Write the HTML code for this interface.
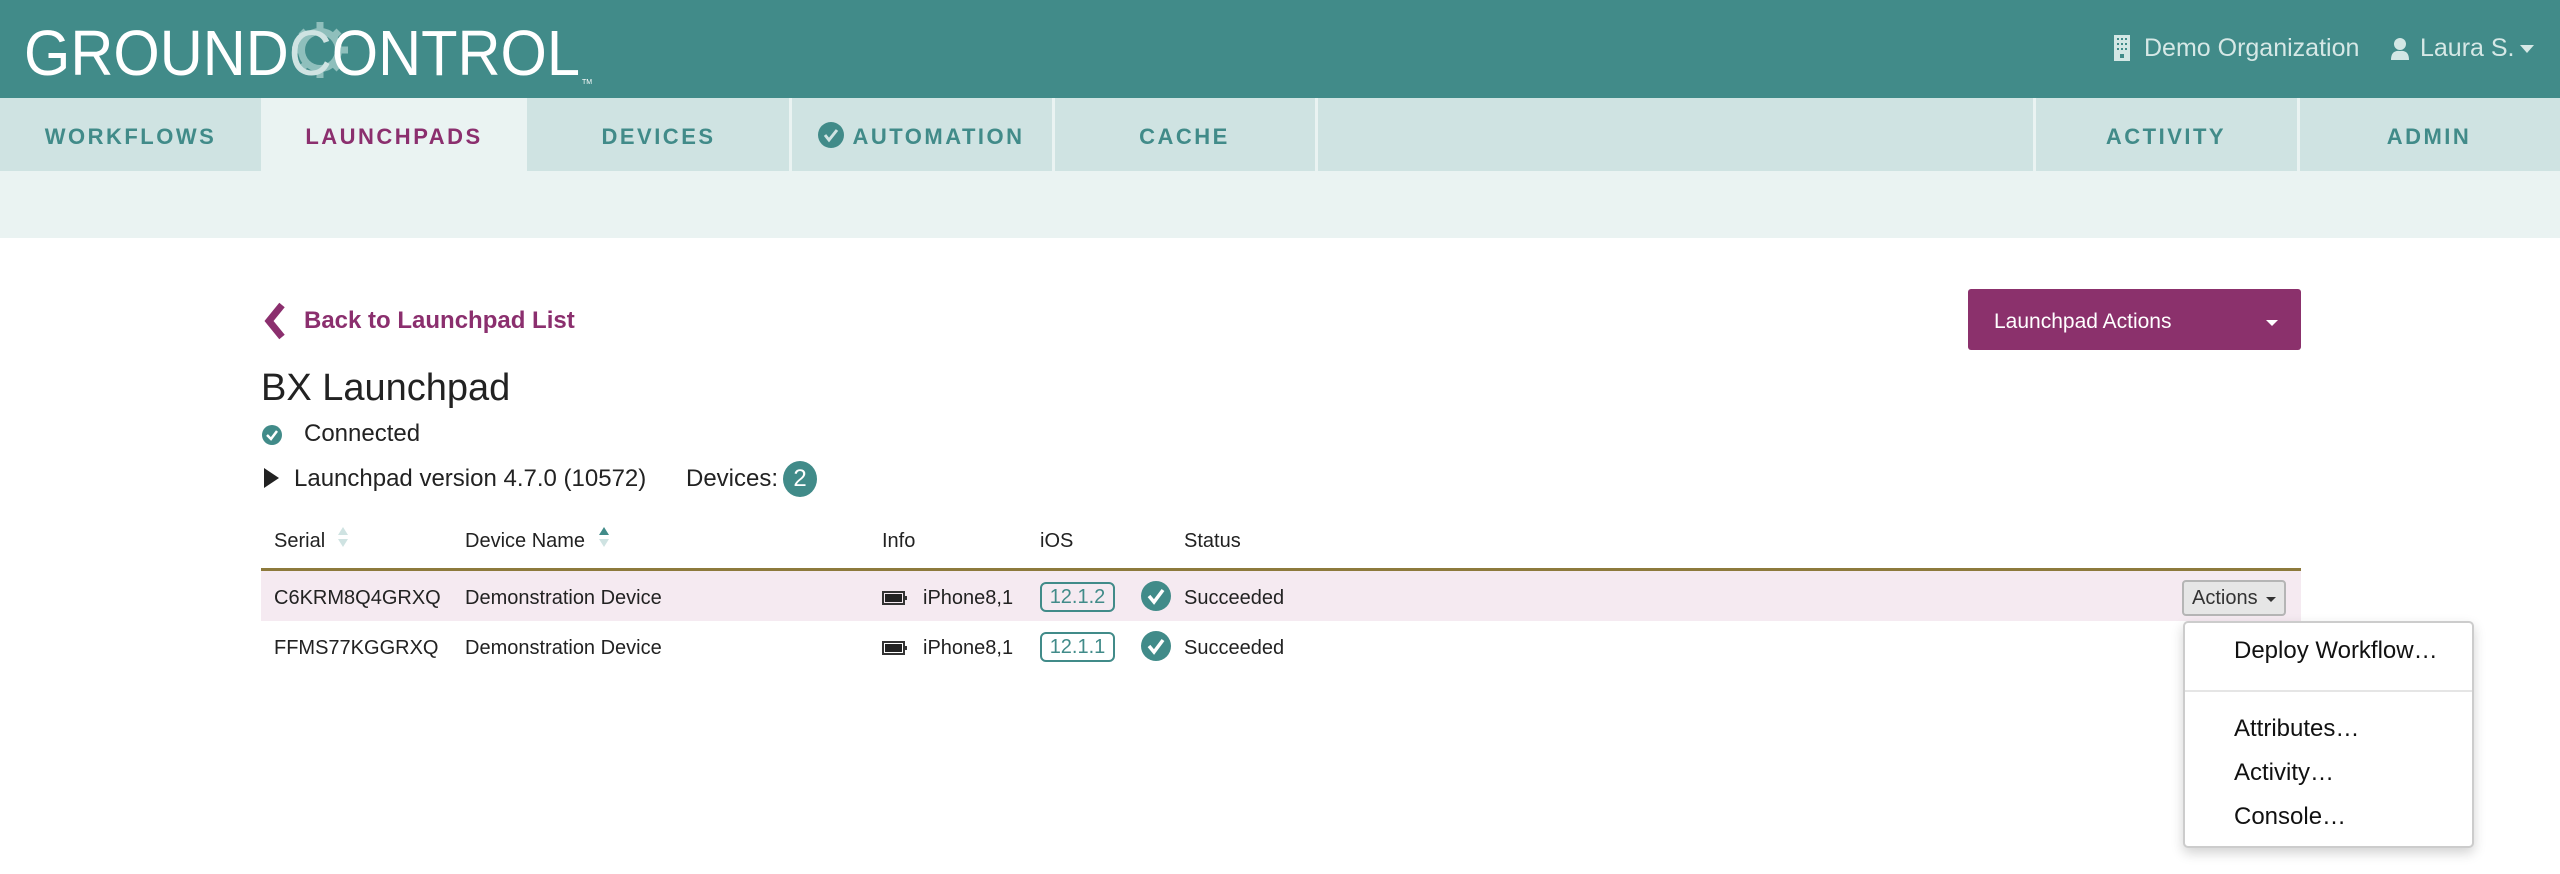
<!DOCTYPE html>
<html><head><meta charset="utf-8"><style>
*{margin:0;padding:0;box-sizing:border-box}
body{width:2560px;height:874px;background:#fff;font-family:"Liberation Sans",sans-serif;position:relative;overflow:hidden;color:#222}
.abs{position:absolute}
#hdr{left:0;top:0;width:2560px;height:98px;background:#418b89}
#nav{left:0;top:98px;width:2560px;height:73px;background:#cfe3e2}
#strip{left:0;top:171px;width:2560px;height:67px;background:#eaf3f2}
.tab{position:absolute;top:98px;height:73px;line-height:73px;text-align:center;font-weight:bold;font-size:22px;letter-spacing:2.5px;color:#418b89}
.sep{position:absolute;top:98px;width:3px;height:73px;background:#eaf3f2}
.t20{font-size:20px;white-space:nowrap}
.dd{font-size:24px;color:#111}
</style></head><body>
<div id="hdr" class="abs"></div>
<svg class="abs" style="left:20px;top:14px" width="580" height="72" viewBox="0 0 580 72">
<g fill="#8fbfbc"><circle cx="300" cy="36" r="22"/>
<g stroke="#8fbfbc" stroke-width="7"><line x1="300" y1="8" x2="300" y2="64"/><line x1="272" y1="36" x2="328" y2="36"/><line x1="281" y1="17" x2="319" y2="55"/><line x1="319" y1="17" x2="281" y2="55"/></g></g>
<circle cx="300" cy="36" r="15" fill="#418b89"/>
<text x="4" y="61" font-family="Liberation Sans" font-size="64" fill="#fff" textLength="556" lengthAdjust="spacingAndGlyphs">GROUND<tspan fill="#cfe3e2">C</tspan>ONTROL</text>
<text x="562" y="70" font-size="7" fill="#fff">TM</text>
</svg>
<svg class="abs" style="left:2113px;top:35px" width="18" height="26"><rect x="1" y="0" width="16" height="26" fill="#d3e7e5"/><g fill="#418b89"><rect x="4" y="3" width="2" height="2"/><rect x="8" y="3" width="2" height="2"/><rect x="12" y="3" width="2" height="2"/><rect x="4" y="8" width="2" height="2"/><rect x="8" y="8" width="2" height="2"/><rect x="12" y="8" width="2" height="2"/><rect x="4" y="13" width="2" height="2"/><rect x="8" y="13" width="2" height="2"/><rect x="12" y="13" width="2" height="2"/><rect x="7" y="19" width="4" height="4"/></g></svg>
<div class="abs" style="left:2144px;top:34px;font-size:25px;color:#d6e8e6">Demo Organization</div>
<svg class="abs" style="left:2390px;top:37px" width="20" height="24"><circle cx="10" cy="7" r="6" fill="#d3e7e5"/><path d="M1 23 Q1 13 10 14 Q19 13 19 23Z" fill="#d3e7e5"/></svg>
<div class="abs" style="left:2420px;top:34px;font-size:25px;color:#d6e8e6">Laura S.</div>
<div class="abs" style="left:2520px;top:45px;border-left:7px solid transparent;border-right:7px solid transparent;border-top:8px solid #d6e8e6"></div>

<div id="nav" class="abs"></div>
<div id="strip" class="abs"></div>
<div class="abs" style="left:261px;top:98px;width:266px;height:73px;background:#eaf3f2"></div>
<div class="tab" style="left:0;width:261px;top:100px">WORKFLOWS</div>
<div class="tab" style="left:261px;width:266px;color:#8b2f6e;top:100px">LAUNCHPADS</div>
<div class="tab" style="left:527px;width:263px;top:100px">DEVICES</div>
<div class="tab" style="left:790px;width:263px;top:100px"><span style="display:inline-block;width:26px;height:26px;border-radius:50%;background:#418b89;vertical-align:-4px;margin-right:8px;position:relative"><svg width="26" height="26" style="position:absolute;left:0;top:0"><path d="M7 13 L11 18 L19 8" stroke="#cfe3e2" stroke-width="3" fill="none"/></svg></span>AUTOMATION</div>
<div class="tab" style="left:1053px;width:263px;top:100px">CACHE</div>
<div class="tab" style="left:2034px;width:264px;top:100px">ACTIVITY</div>
<div class="tab" style="left:2298px;width:262px;top:100px">ADMIN</div>
<div class="sep" style="left:789px"></div><div class="sep" style="left:1052px"></div><div class="sep" style="left:1315px"></div><div class="sep" style="left:2033px"></div><div class="sep" style="left:2297px"></div>

<svg class="abs" style="left:262px;top:302px" width="26" height="38"><path d="M20 3 L7 19 L20 35" stroke="#8b2f6e" stroke-width="7" fill="none"/></svg>
<div class="abs" style="left:304px;top:307px;font-size:24px;font-weight:bold;color:#8b2f6e">Back to Launchpad List</div>
<div class="abs" style="left:1968px;top:289px;width:333px;height:61px;background:#8b316c;border-radius:3px"></div>
<div class="abs" style="left:1994px;top:310px;font-size:21px;color:#fff">Launchpad Actions</div>
<div class="abs" style="left:2266px;top:320px;border-left:6px solid transparent;border-right:6px solid transparent;border-top:6px solid #fff"></div>

<div class="abs" style="left:261px;top:367px;font-size:38px;color:#222">BX Launchpad</div>
<svg class="abs" style="left:261px;top:424px" width="22" height="22"><circle cx="11" cy="11" r="10" fill="#418b89"/><path d="M6 11 L10 15 L16 7" stroke="#fff" stroke-width="2.5" fill="none"/></svg>
<div class="abs" style="left:304px;top:420px;font-size:24px">Connected</div>
<div class="abs" style="left:264px;top:468px;border-top:10px solid transparent;border-bottom:10px solid transparent;border-left:15px solid #222"></div>
<div class="abs" style="left:294px;top:465px;font-size:24px">Launchpad version 4.7.0 (10572)</div>
<div class="abs" style="left:686px;top:465px;font-size:24px">Devices:</div>
<div class="abs" style="left:783px;top:461px;width:34px;height:36px;border-radius:50%;background:#418b89;color:#fff;font-size:24px;text-align:center;line-height:36px">2</div>

<div class="abs t20" style="left:274px;top:530px">Serial</div>
<div class="abs" style="left:338px;top:527px;border-left:5px solid transparent;border-right:5px solid transparent;border-bottom:8px solid #cfe3e2"></div>
<div class="abs" style="left:338px;top:539px;border-left:5px solid transparent;border-right:5px solid transparent;border-top:8px solid #cfe3e2"></div>
<div class="abs t20" style="left:465px;top:530px">Device Name</div>
<div class="abs" style="left:599px;top:527px;border-left:5px solid transparent;border-right:5px solid transparent;border-bottom:8px solid #418b89"></div>
<div class="abs" style="left:599px;top:539px;border-left:5px solid transparent;border-right:5px solid transparent;border-top:8px solid #cfe3e2"></div>
<div class="abs t20" style="left:882px;top:530px">Info</div>
<div class="abs t20" style="left:1040px;top:530px">iOS</div>
<div class="abs t20" style="left:1184px;top:530px">Status</div>
<div class="abs" style="left:261px;top:568px;width:2040px;height:3px;background:#8d7a3c"></div>
<div class="abs" style="left:261px;top:571px;width:2040px;height:50px;background:#f5eaf1"></div>

<div class="abs t20" style="left:274px;top:587px">C6KRM8Q4GRXQ</div>
<div class="abs t20" style="left:465px;top:587px">Demonstration Device</div>
<div class="abs t20" style="left:274px;top:637px">FFMS77KGGRXQ</div>
<div class="abs t20" style="left:465px;top:637px">Demonstration Device</div>
<svg class="abs" style="left:882px;top:590px" width="26" height="16"><rect x="1" y="2" width="21" height="12" fill="none" stroke="#333" stroke-width="2"/><rect x="3" y="4" width="17" height="8" fill="#222"/><rect x="23" y="6" width="2" height="4" fill="#333"/></svg>
<svg class="abs" style="left:882px;top:640px" width="26" height="16"><rect x="1" y="2" width="21" height="12" fill="none" stroke="#333" stroke-width="2"/><rect x="3" y="4" width="17" height="8" fill="#222"/><rect x="23" y="6" width="2" height="4" fill="#333"/></svg>
<div class="abs t20" style="left:923px;top:587px">iPhone8,1</div>
<div class="abs t20" style="left:923px;top:637px">iPhone8,1</div>
<div class="abs t20" style="left:1040px;top:582px;width:75px;height:30px;border:2px solid #418b89;border-radius:6px;color:#418b89;text-align:center;line-height:26px">12.1.2</div>
<div class="abs t20" style="left:1040px;top:632px;width:75px;height:30px;border:2px solid #418b89;border-radius:6px;color:#418b89;text-align:center;line-height:26px">12.1.1</div>
<svg class="abs" style="left:1141px;top:581px" width="30" height="30"><circle cx="15" cy="15" r="15" fill="#418b89"/><path d="M8 15 L13 21 L22 9" stroke="#fff" stroke-width="3.5" fill="none"/></svg>
<svg class="abs" style="left:1141px;top:631px" width="30" height="30"><circle cx="15" cy="15" r="15" fill="#418b89"/><path d="M8 15 L13 21 L22 9" stroke="#fff" stroke-width="3.5" fill="none"/></svg>
<div class="abs t20" style="left:1184px;top:587px">Succeeded</div>
<div class="abs t20" style="left:1184px;top:637px">Succeeded</div>

<div class="abs" style="left:2182px;top:580px;width:104px;height:36px;background:#e6e6e6;border:2px solid #b5b5b5;border-radius:4px"></div>
<div class="abs t20" style="left:2192px;top:587px;color:#333">Actions</div>
<div class="abs" style="left:2266px;top:597px;border-left:5px solid transparent;border-right:5px solid transparent;border-top:5px solid #333"></div>
<div class="abs" style="left:2183px;top:621px;width:291px;height:227px;background:#fff;border:2px solid #ccc;border-radius:5px;box-shadow:0 5px 12px rgba(0,0,0,0.18)"></div>
<div class="abs" style="left:2185px;top:690px;width:287px;height:2px;background:#e5e5e5"></div>
<div class="abs dd" style="left:2234px;top:637px">Deploy Workflow…</div>
<div class="abs dd" style="left:2234px;top:715px">Attributes…</div>
<div class="abs dd" style="left:2234px;top:759px">Activity…</div>
<div class="abs dd" style="left:2234px;top:803px">Console…</div>
</body></html>
